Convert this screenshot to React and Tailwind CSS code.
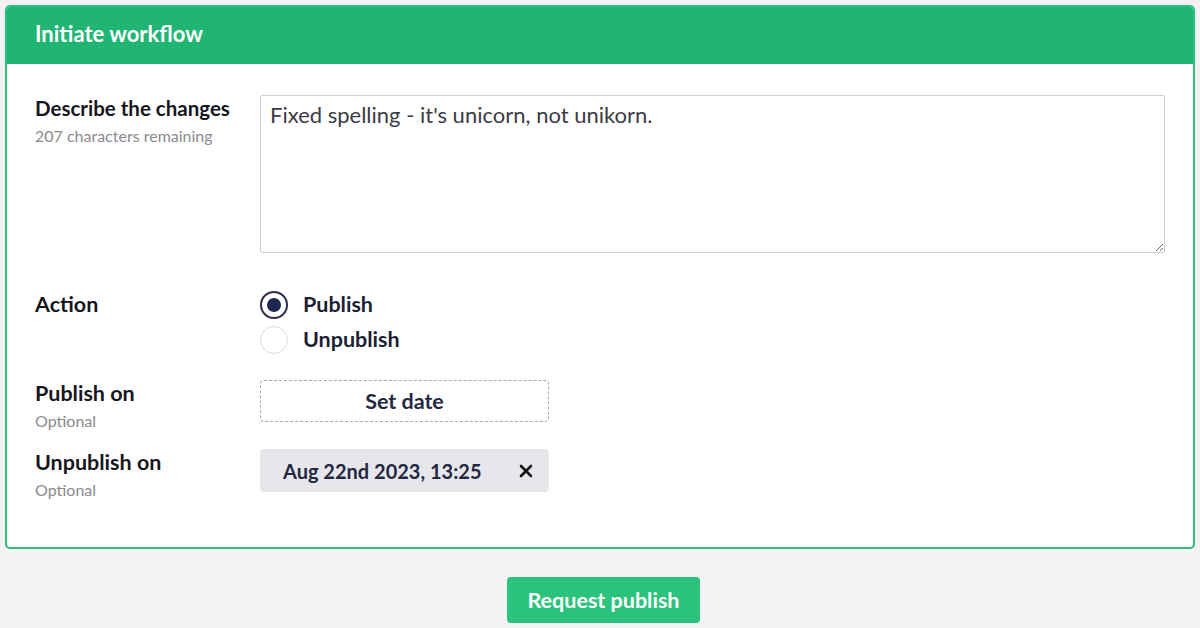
import React from 'react';

const Label = ({ title, hint, size = 'text-[21.5px]' }) => (
    <div className="w-[225px] shrink-0">
        <div className={`${size} font-bold text-[#16161d] leading-[26px]`}>{title}</div>
        {hint && <div className="text-[16px] text-[#8a8a8f] leading-[20px] mt-[5px]">{hint}</div>}
    </div>
);

const Radio = ({ checked, label }) => (
    <label className="flex items-center gap-[15px] h-[35px]">
        <span
            className={
                checked
                    ? 'w-[28px] h-[28px] rounded-full border-2 border-[#2b2f4c] flex items-center justify-center bg-white'
                    : 'w-[28px] h-[28px] rounded-full border border-[#dcdce0] bg-white'
            }
        >
            {checked && <span className="w-[14px] h-[14px] rounded-full bg-[#1f2850]" />}
        </span>
        <span className="text-[21.5px] font-bold text-[#1c1f33]">{label}</span>
    </label>
);

const App = () => {
    return (
        <div className="w-[1200px] h-[628px] bg-[#f4f2f2] pt-[5px] px-[5px] font-['Lato',sans-serif] overflow-hidden">
            <div className="bg-white border-2 border-[#2dbf7d] rounded-[5px] overflow-hidden h-[544px]">
                <div className="bg-[#20b573] h-[57px] flex items-center px-[28px] pb-[4px]">
                    <h1 className="text-[22px] font-bold text-white">Initiate workflow</h1>
                </div>

                <div className="pl-[28px] pr-[28px] pt-[31px]">
                    <div className="flex">
                        <Label title="Describe the changes" hint="207 characters remaining" size="text-[20.5px]" />
                        <textarea
                            className="flex-1 h-[158px] border border-[#cfcfd2] rounded-[2px] px-[9px] pt-[6px] text-[22px] leading-[26px] text-[#3c3c44] font-['Lato',sans-serif] outline-none"
                            defaultValue="Fixed spelling - it's unicorn, not unikorn."
                        />
                    </div>

                    <div className="flex mt-[34px]">
                        <div className="w-[225px] shrink-0 pt-[4px]">
                            <div className="text-[21.5px] leading-[26px] font-bold text-[#16161d]">Action</div>
                        </div>
                        <div className="flex flex-col">
                            <Radio checked label="Publish" />
                            <Radio label="Unpublish" />
                        </div>
                    </div>

                    <div className="flex items-start mt-[23px]">
                        <Label title="Publish on" hint="Optional" />
                        <button className="w-[289px] h-[42px] border border-dashed border-[#a9a9b0] rounded-[4px] text-[21.5px] font-bold text-[#232842] bg-white">
                            Set date
                        </button>
                    </div>

                    <div className="flex items-start mt-[18px]">
                        <Label title="Unpublish on" hint="Optional" />
                        <div className="w-[289px] h-[43px] bg-[#e7e7eb] rounded-[4px] flex items-center justify-between pl-[23px] pr-[16px]">
                            <span className="text-[20px] font-bold text-[#232842]">Aug 22nd 2023, 13:25</span>
                            <svg width="14" height="14" viewBox="0 0 14 14">
                                <path d="M2 2 L12 12 M12 2 L2 12" stroke="#111" strokeWidth="2.6" strokeLinecap="round" />
                            </svg>
                        </div>
                    </div>
                </div>
            </div>

            <div className="flex justify-center mt-[28px] pl-[7px]">
                <button className="h-[46px] px-[21px] bg-[#2bc27c] rounded-[4px] text-[21.5px] font-bold text-white">
                    Request publish
                </button>
            </div>
        </div>
    );
};

export default App;
